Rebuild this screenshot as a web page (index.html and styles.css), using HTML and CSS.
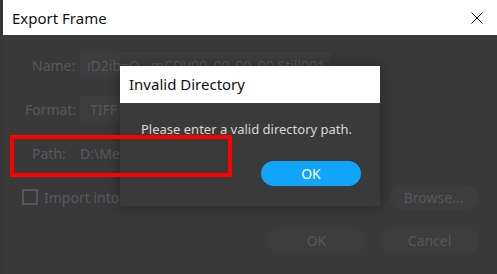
FILE: index.html
```html
<!DOCTYPE html>
<html>
<head>
    <title>Export Frame</title>
    <link rel="stylesheet" href="styles.css">
</head>
<body>
    <div class="edge"></div>
    <div class="window">
        <header class="titlebar">
            <span class="title">Export Frame</span>
            <svg class="close" width="12" height="12" viewBox="0 0 12 12">
                <path d="M0.5 0.5 L11.5 11.5 M11.5 0.5 L0.5 11.5" stroke="#000" stroke-width="1"/>
            </svg>
        </header>
        <div class="content">
            <div class="row">
                <span class="label">Name:</span>
                <span class="field field-name">ıD2ib=Q_-mCDV00_00_00_00 Still001</span>
            </div>
            <div class="row">
                <span class="label label-wide">Format:</span>
                <span class="field field-format">TIFF</span>
            </div>
            <div class="row">
                <span class="label">Path:</span>
                <span class="field field-path">D:\Media\Exports</span>
            </div>
            <div class="row row-check">
                <span class="checkbox"></span>
                <span class="check-label">Import into</span>
                <button class="btn btn-browse">Browse...</button>
            </div>
            <div class="actions">
                <button class="btn">OK</button>
                <button class="btn">Cancel</button>
            </div>
        </div>
    </div>

    <div class="alert">
        <div class="alert-head">Invalid Directory</div>
        <div class="alert-body">
            <p>Please enter a valid directory path.</p>
            <button class="alert-ok">OK</button>
        </div>
    </div>

    <div class="highlight"></div>
</body>
</html>
```

FILE: styles.css
```css
body {
    font-family: "Noto Sans", "Open Sans", sans-serif;
    background-color: #393939;
    margin: 0;
    width: 497px;
    height: 274px;
    overflow: hidden;
    display: flex;
}
.edge {
    width: 3px;
    background-color: #363636;
}
.window {
    flex: 1;
    display: flex;
    flex-direction: column;
}
.titlebar {
    height: 35px;
    background-color: #fff;
    display: flex;
    align-items: center;
    justify-content: space-between;
    padding: 0 14px 0 9px;
}
.title {
    font-size: 15px;
    color: #111;
}
.content {
    padding: 17px 0 0 0;
    color: #55595e;
    font-size: 14px;
}
.row {
    display: flex;
    align-items: center;
    height: 27px;
    margin-bottom: 17px;
}
.label {
    width: 48px;
    padding-left: 29px;
}
.label-wide {
    width: 55px;
    padding-left: 22px;
}
.field {
    height: 27px;
    line-height: 27px;
    padding: 0 7px;
    box-sizing: border-box;
    background-color: #3d3d3d;
    white-space: nowrap;
    overflow: hidden;
}
.field-name {
    width: 250px;
}
.field-format {
    width: 120px;
    padding-left: 10px;
}
.field-path {
    background-color: transparent;
    padding-left: 0;
}
.row-check {
    margin-bottom: 0;
    height: 26px;
}
.checkbox {
    width: 12px;
    height: 12px;
    border: 2px solid #565656;
    margin: 0 6px 0 19px;
}
.check-label {
    flex: 1;
    white-space: nowrap;
}
.btn {
    font-family: inherit;
    font-size: 14px;
    color: #55595e;
    background-color: #3d3d3d;
    border: none;
    border-radius: 13px;
    width: 99px;
    height: 25px;
    padding: 0;
}
.btn-browse {
    width: 89px;
    margin-right: 19px;
}
.actions {
    display: flex;
    justify-content: flex-end;
    gap: 14px;
    padding: 18px 18px 0 0;
}
.alert {
    position: absolute;
    z-index: 2;
    left: 120px;
    top: 66px;
    width: 260px;
    height: 140px;
    background-color: #3a3a3a;
    box-shadow: 0 0 14px rgba(0, 0, 0, 0.35);
}
.alert-head {
    height: 37px;
    background-color: #fff;
    color: #111;
    font-size: 15px;
    line-height: 37px;
    padding-left: 9px;
}
.alert-body {
    display: flex;
    flex-direction: column;
    align-items: flex-end;
}
.alert-body p {
    align-self: flex-start;
    margin: 17px 0 0 21px;
    font-size: 13px;
    color: #d8d8d8;
}
.alert-ok {
    margin: 23px 19px 0 0;
    width: 100px;
    height: 25px;
    border: none;
    border-radius: 13px;
    background-color: #10a4fb;
    color: #fff;
    font-family: inherit;
    font-size: 14px;
    padding: 0;
}
.highlight {
    position: absolute;
    z-index: 3;
    left: 10px;
    top: 135px;
    width: 214px;
    height: 34px;
    border: 4px solid #ff0000;
}
```
